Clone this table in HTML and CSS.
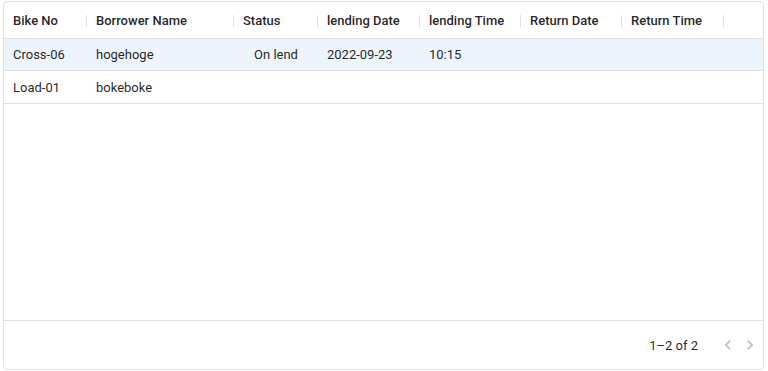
FILE: index.html
```html
<!DOCTYPE html>
<html lang="en">
<head>
<meta charset="utf-8">
<title>Bike lending</title>
<link rel="stylesheet" href="styles.css">
</head>
<body>
<div class="grid">
  <div class="header">
    <div class="hcell c1">Bike No</div>
    <div class="hcell c2">Borrower Name</div>
    <div class="hcell c3">Status</div>
    <div class="hcell c4">lending Date</div>
    <div class="hcell c5">lending Time</div>
    <div class="hcell c6">Return Date</div>
    <div class="hcell c7">Return Time</div>
  </div>
  <div class="body">
    <div class="row selected">
      <div class="cell c1">Cross-06</div>
      <div class="cell c2">hogehoge</div>
      <div class="cell c3 center">On lend</div>
      <div class="cell c4">2022-09-23</div>
      <div class="cell c5">10:15</div>
      <div class="cell c6"></div>
      <div class="cell c7"></div>
    </div>
    <div class="row">
      <div class="cell c1">Load-01</div>
      <div class="cell c2">bokeboke</div>
      <div class="cell c3 center"></div>
      <div class="cell c4"></div>
      <div class="cell c5"></div>
      <div class="cell c6"></div>
      <div class="cell c7"></div>
    </div>
  </div>
  <div class="footer">
    <span class="rows-label">1–2 of 2</span>
    <div class="actions">
      <svg class="arrow" viewBox="0 0 24 24"><path d="M15.41 16.59 10.83 12l4.58-4.59L14 6l-6 6 6 6 1.41-1.41z"/></svg>
      <svg class="arrow" viewBox="0 0 24 24"><path d="M8.59 16.59 13.17 12 8.59 7.41 10 6l6 6-6 6-1.41-1.41z"/></svg>
    </div>
  </div>
</div>
</body>
</html>
```
FILE: styles.css
```css
* { box-sizing: border-box; }
html, body { margin: 0; padding: 0; background: #fff; }
body {
  font-family: Roboto, "Liberation Sans", sans-serif;
  font-size: 13px;
  color: rgba(0, 0, 0, 0.87);
}
.grid {
  margin: 1px 0 0 3px;
  width: 761px;
  height: 369px;
  border: 1px solid #e0e0e0;
  border-radius: 4px;
  display: flex;
  flex-direction: column;
  overflow: hidden;
}
.header {
  display: flex;
  height: 37px;
  border-bottom: 1px solid #e0e0e0;
  flex: none;
}
.hcell {
  position: relative;
  display: flex;
  align-items: center;
  padding: 0 9px;
  font-weight: 500;
  white-space: nowrap;
}
.hcell::after {
  content: "";
  position: absolute;
  right: 0;
  top: 13px;
  width: 1px;
  height: 12px;
  background: #e0e0e0;
}
.c1 { width: 83px; }
.c2 { width: 147px; }
.c3 { width: 84px; }
.c4 { width: 102px; }
.c5 { width: 101px; }
.c6 { width: 101px; }
.c7 { width: 102px; }
.body { flex: 1; }
.row {
  display: flex;
  height: 32px;
  border-bottom: 1px solid #e0e0e0;
}
.row + .row { height: 33px; }
.row.selected { background: #edf4fb; }
.cell {
  display: flex;
  align-items: center;
  padding: 0 9px;
  white-space: nowrap;
}
.cell.center { justify-content: center; }
.footer {
  flex: none;
  height: 49px;
  border-top: 1px solid #e0e0e0;
  display: flex;
  align-items: center;
  justify-content: flex-end;
  padding-right: 3px;
}
.actions {
  display: flex;
  gap: 2px;
  margin-left: 20px;
}
.arrow {
  width: 20px;
  height: 20px;
  fill: rgba(0, 0, 0, 0.26);
}
```
